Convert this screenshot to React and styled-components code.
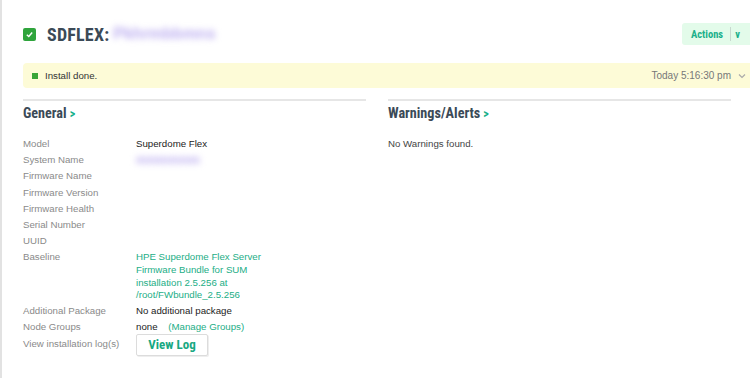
import React from 'react'
import styled, { createGlobalStyle } from 'styled-components'

const Global = createGlobalStyle`
  body { margin: 0; background: #fff; font-family: 'Liberation Sans', Arial, sans-serif; }
`;

const condensed = `'Liberation Sans Narrow', 'Roboto Condensed', 'DejaVu Sans Condensed', Roboto, sans-serif`;

const Page = styled.div`
  height: 378px;
  border-left: 2px solid #e2e2e2;
  padding-left: 21px;
  box-sizing: border-box;
  overflow: hidden;
`;

const Header = styled.div`
  display: flex;
  align-items: center;
  justify-content: space-between;
  padding-top: 23px;
  height: 22px;
`;

const TitleWrap = styled.div`
  display: flex;
  align-items: center;
`;

const Check = styled.span`
  width: 13px;
  height: 13px;
  border-radius: 2px;
  background: #2fa43c;
  display: inline-flex;
  align-items: center;
  justify-content: center;
  margin-right: 11px;
`;

const Title = styled.h1`
  margin: 0;
  font-family: ${condensed};
  font-stretch: condensed;
  font-weight: bold;
  font-size: 18px;
  color: #3b4a57;
  letter-spacing: 0.2px;
`;

const Blur = styled.span`
  display: inline-block;
  vertical-align: top;
  line-height: 12px;
  color: ${p => p.color || '#bcaef0'};
  filter: blur(${p => p.amount || 3}px);
  font-family: 'Liberation Sans', sans-serif;
  font-weight: ${p => p.bold ? 'bold' : 'normal'};
  font-size: ${p => p.size || 13}px;
  margin-left: ${p => p.left || 0}px;
`;

const Actions = styled.div`
  display: flex;
  align-items: center;
  height: 22px;
  background: #e3fbea;
  border-radius: 3px 0 0 3px;
  padding-left: 9px;
  width: 59px;
  font-family: ${condensed};
  font-stretch: condensed;
  font-weight: bold;
  font-size: 10.5px;
  color: #1ab08a;
`;

const Sep = styled.span`
  width: 1px;
  height: 14px;
  background: #c8d8cf;
  margin: 0 4px 0 7px;
`;

const Banner = styled.div`
  display: flex;
  align-items: center;
  justify-content: space-between;
  margin-top: 18px;
  height: 25px;
  background: #fdfbd7;
  border-radius: 4px 0 0 4px;
  padding: 0 4px 0 9px;
  font-size: 9.7px;
  color: #333;
`;

const Msg = styled.div`
  display: flex;
  align-items: center;
  gap: 7px;
`;

const Dot = styled.span`
  width: 6px;
  height: 6px;
  background: #3aa537;
`;

const Time = styled.div`
  display: flex;
  align-items: center;
  gap: 7px;
  color: #777;
  font-size: 10px;
`;

const Columns = styled.div`
  display: grid;
  grid-template-columns: 343px 343px;
  column-gap: 22px;
  margin-top: 11px;
`;

const Section = styled.section`
  border-top: 2px solid #e6e6e6;
`;

const Heading = styled.h2`
  margin: 4px 0 0;
  height: 19px;
  font-family: ${condensed};
  font-stretch: condensed;
  font-weight: bold;
  font-size: 14.2px;
  color: #3b4a57;
  span { color: #17b08a; font-size: 12px; margin-left: 3px; }
`;

const Rows = styled.div`
  display: grid;
  grid-template-columns: 113px 1fr;
  margin-top: 14px;
  font-size: 9.7px;
  line-height: 12.6px;
  row-gap: 3.6px;
`;

const Label = styled.div`
  color: #8a8a8a;
`;

const Value = styled.div`
  color: ${p => p.link ? '#1cae86' : '#222'};
`;

const Link = styled.span`
  color: #1cae86;
  margin-left: 8px;
`;

const Note = styled.div`
  margin-top: 14px;
  font-size: 9.7px;
  color: #444;
`;

const Button = styled.button`
  margin-top: -4px;
  width: 72px;
  height: 22px;
  background: #fff;
  border: 1px solid #dcdcdc;
  border-radius: 2px;
  color: #17a882;
  font-family: ${condensed};
  font-stretch: condensed;
  font-weight: bold;
  font-size: 13px;
  padding: 0;
  box-shadow: 1px 1px 0 #eee;
`;

const rows = [
  ['Model', 'Superdome Flex'],
  ['System Name', 'blur'],
  ['Firmware Name', ''],
  ['Firmware Version', ''],
  ['Firmware Health', ''],
  ['Serial Number', ''],
  ['UUID', ''],
];

export default function App() {
  return (
    <Page>
      <Global />
      <Header>
        <TitleWrap>
          <Check>
            <svg width="9" height="9" viewBox="0 0 10 10">
              <path d="M2 5.2 L4.2 7.2 L8 2.8" stroke="#fff" strokeWidth="1.6" fill="none" />
            </svg>
          </Check>
          <Title>SDFLEX:</Title>
          <Blur bold size={16} left={4}>Pkhrmbbmns</Blur>
        </TitleWrap>
        <Actions>
          Actions
          <Sep />
          v
        </Actions>
      </Header>
      <Banner>
        <Msg><Dot />Install done.</Msg>
        <Time>
          Today 5:16:30 pm
          <svg width="8" height="6" viewBox="0 0 8 6">
            <path d="M1 1.5 L4 4.5 L7 1.5" stroke="#aaa" strokeWidth="1.2" fill="none" />
          </svg>
        </Time>
      </Banner>
      <Columns>
        <Section>
          <Heading>General<span>&gt;</span></Heading>
          <Rows>
            {rows.map(([l, v]) => (
              <React.Fragment key={l}>
                <Label>{l}</Label>
                <Value>
                  {v === 'blur' ? <Blur size={12} bold>mmmmmm</Blur> : v}
                </Value>
              </React.Fragment>
            ))}
            <Label>Baseline</Label>
            <Value link>
              HPE Superdome Flex Server<br />
              Firmware Bundle for SUM<br />
              installation 2.5.256 at<br />
              /root/FWbundle_2.5.256
            </Value>
            <Label>Additional Package</Label>
            <Value>No additional package</Value>
            <Label>Node Groups</Label>
            <Value>none <Link>(Manage Groups)</Link></Value>
            <Label>View installation log(s)</Label>
            <Value><Button>View Log</Button></Value>
          </Rows>
        </Section>
        <Section>
          <Heading>Warnings/Alerts<span>&gt;</span></Heading>
          <Note>No Warnings found.</Note>
        </Section>
      </Columns>
    </Page>
  )
}
